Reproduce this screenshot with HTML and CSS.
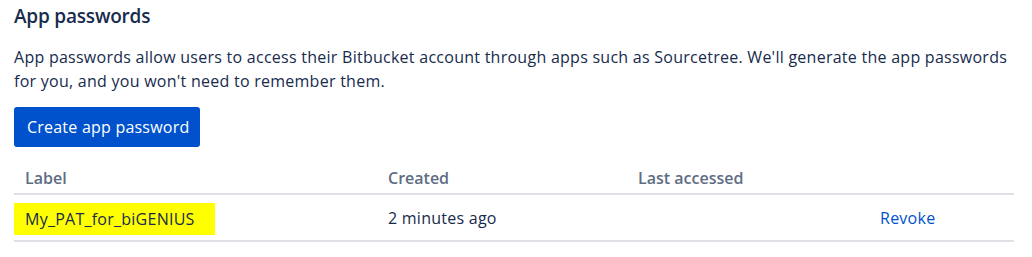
FILE: index.html
```html
<!DOCTYPE html>
<html lang="en">
<head>
<meta charset="utf-8">
<title>App passwords</title>
<link rel="stylesheet" href="styles.css">
</head>
<body>
<main class="page">
  <h2 class="title">App passwords</h2>
  <p class="intro">App passwords allow users to access their Bitbucket account through apps such as Sourcetree. We'll generate the app passwords for you, and you won't need to remember them.</p>
  <button class="btn-primary" type="button">Create app password</button>
  <div class="table">
    <div class="row head">
      <div class="cell">Label</div>
      <div class="cell">Created</div>
      <div class="cell">Last accessed</div>
      <div class="cell"></div>
    </div>
    <div class="row body">
      <div class="cell label-cell"><span class="highlight">My_PAT_for_biGENIUS</span></div>
      <div class="cell">2 minutes ago</div>
      <div class="cell"></div>
      <div class="cell"><a class="link" href="#">Revoke</a></div>
    </div>
  </div>
</main>
</body>
</html>
```

FILE: styles.css
```css
html, body {
  margin: 0;
  padding: 0;
  background: #ffffff;
}
body {
  font-family: "Open Sans", "Noto Sans", sans-serif;
  color: #172b4d;
  font-size: 16px;
  line-height: 24px;
}
.page {
  width: 1000px;
  padding: 4px 0 0 14px;
}
.title {
  margin: 0;
  font-size: 19px;
  line-height: 24px;
  font-weight: 600;
  letter-spacing: -0.2px;
  color: #172b4d;
}
.intro {
  margin: 17px 0 0;
  letter-spacing: 0.26px;
}
.btn-primary {
  margin-top: 14px;
  height: 40px;
  padding: 0 11px 0 13px;
  border: 0;
  border-radius: 3px;
  background: #0052cc;
  color: #ffffff;
  font-family: inherit;
  font-size: 16px;
  line-height: 24px;
  letter-spacing: 0.22px;
  display: block;
}
.table {
  margin-top: 11px;
  width: 1000px;
}
.row {
  display: grid;
  grid-template-columns: 363px 250px 242px 1fr;
  border-bottom: 2px solid #dfe1e6;
}
.cell {
  padding-left: 11px;
}
.head .cell {
  padding-top: 8px;
  padding-bottom: 3px;
  font-weight: 600;
  color: #5e6c84;
  letter-spacing: 0;
}
.body .cell {
  height: 45px;
  display: flex;
  align-items: center;
  letter-spacing: 0.25px;
}
.body .label-cell {
  padding-left: 0;
}
.highlight {
  display: flex;
  align-items: center;
  width: 190px;
  height: 32px;
  padding-left: 11px;
  background: #ffff00;
  margin-top: 2px;
}
.link {
  color: #0052cc;
  text-decoration: none;
}
```
